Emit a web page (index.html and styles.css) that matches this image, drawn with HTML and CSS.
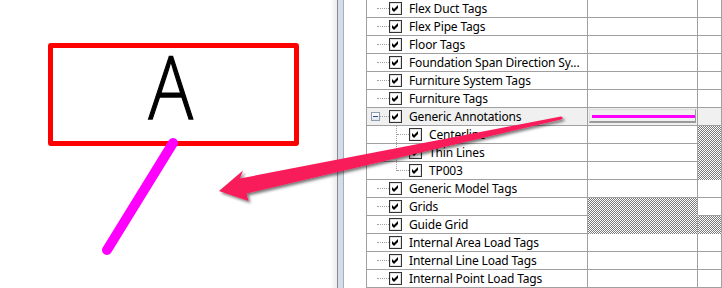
FILE: index.html
```html
<!DOCTYPE html>
<html lang="en">
<head>
    <meta charset="UTF-8">
    <title>Visibility/Graphic Overrides - Annotation Categories</title>
    <link rel="stylesheet" href="styles.css">
</head>
<body>
    <div class="screen">
        <!-- Drawing area with the sample tag -->
        <div class="canvas">
            <div class="tag-box"><span class="tag-letter">A</span></div>
            <svg class="leader" width="330" height="288" aria-hidden="true">
                <line x1="173" y1="143" x2="107" y2="250" stroke="#ff00ff" stroke-width="10" stroke-linecap="round"/>
            </svg>
        </div>

        <div class="splitter">
            <span class="splitter__shade"></span>
            <span class="splitter__edge"></span>
            <span class="splitter__bar"></span>
            <span class="splitter__edge splitter__edge--light"></span>
            <span class="splitter__gap"></span>
        </div>

        <!-- Category list -->
        <div class="categories">
            <div class="row">
                <div class="cell name"><span class="branch"></span><span class="check"></span><span class="label">Flex Duct Tags</span></div>
                <div class="cell"></div><div class="cell"></div>
            </div>
            <div class="row">
                <div class="cell name"><span class="branch"></span><span class="check"></span><span class="label">Flex Pipe Tags</span></div>
                <div class="cell"></div><div class="cell"></div>
            </div>
            <div class="row">
                <div class="cell name"><span class="branch"></span><span class="check"></span><span class="label">Floor Tags</span></div>
                <div class="cell"></div><div class="cell"></div>
            </div>
            <div class="row">
                <div class="cell name"><span class="branch"></span><span class="check"></span><span class="label">Foundation Span Direction Sy...</span></div>
                <div class="cell"></div><div class="cell"></div>
            </div>
            <div class="row">
                <div class="cell name"><span class="branch"></span><span class="check"></span><span class="label">Furniture System Tags</span></div>
                <div class="cell"></div><div class="cell"></div>
            </div>
            <div class="row">
                <div class="cell name"><span class="branch"></span><span class="check"></span><span class="label">Furniture Tags</span></div>
                <div class="cell"></div><div class="cell"></div>
            </div>
            <div class="row row--selected">
                <div class="cell name name--open"><span class="toggle"></span><span class="branch branch--short"></span><span class="check"></span><span class="label">Generic Annotations</span></div>
                <div class="cell cell--swatch"><span class="line-swatch"></span></div>
                <div class="cell"></div>
            </div>
            <div class="row">
                <div class="cell name name--child"><span class="elbow"></span><span class="check"></span><span class="label">Centerline</span></div>
                <div class="cell"></div><div class="cell cell--na"></div>
            </div>
            <div class="row">
                <div class="cell name name--child"><span class="elbow"></span><span class="check"></span><span class="label">Thin Lines</span></div>
                <div class="cell"></div><div class="cell cell--na"></div>
            </div>
            <div class="row">
                <div class="cell name name--child"><span class="elbow elbow--last"></span><span class="check"></span><span class="label">TP003</span></div>
                <div class="cell"></div><div class="cell cell--na"></div>
            </div>
            <div class="row">
                <div class="cell name"><span class="branch"></span><span class="check"></span><span class="label">Generic Model Tags</span></div>
                <div class="cell"></div><div class="cell"></div>
            </div>
            <div class="row">
                <div class="cell name"><span class="branch"></span><span class="check"></span><span class="label">Grids</span></div>
                <div class="cell cell--na"></div><div class="cell"></div>
            </div>
            <div class="row">
                <div class="cell name"><span class="branch"></span><span class="check"></span><span class="label">Guide Grid</span></div>
                <div class="cell cell--na"></div><div class="cell cell--na"></div>
            </div>
            <div class="row">
                <div class="cell name"><span class="branch"></span><span class="check"></span><span class="label">Internal Area Load Tags</span></div>
                <div class="cell"></div><div class="cell"></div>
            </div>
            <div class="row">
                <div class="cell name"><span class="branch"></span><span class="check"></span><span class="label">Internal Line Load Tags</span></div>
                <div class="cell"></div><div class="cell"></div>
            </div>
            <div class="row">
                <div class="cell name"><span class="branch"></span><span class="check"></span><span class="label">Internal Point Load Tags</span></div>
                <div class="cell"></div><div class="cell"></div>
            </div>
        </div>

        <!-- Callout arrow drawn over the screenshot -->
        <svg class="callout" width="722" height="288" aria-hidden="true">
            <defs>
                <filter id="arrowShadow" x="-10%" y="-30%" width="120%" height="160%">
                    <feDropShadow dx="2" dy="2" stdDeviation="1.6" flood-color="#000" flood-opacity="0.55"/>
                </filter>
            </defs>
            <path d="M219 191 L243 170.5 L240 178.5 L561 116.5 Q564.5 118 561 119.5 L246.5 193.5 L248.5 201 Z" fill="#f81b5a" filter="url(#arrowShadow)"/>
        </svg>
    </div>
</body>
</html>
```

FILE: styles.css
```css
:root {
    --grid-line: #a0a0a0;
    --tree-dots: #a0a0a0;
    --row-selected: #f0f0f0;
    --text: #000000;
    --font-ui: "Noto Sans", "Open Sans", sans-serif;
}

* {
    box-sizing: border-box;
}

body {
    margin: 0;
    background: #ffffff;
    font-family: var(--font-ui);
    font-size: 12px;
    color: var(--text);
}

.screen {
    position: relative;
    display: flex;
    width: 722px;
    height: 288px;
    overflow: hidden;
}

/* Drawing area */
.canvas {
    position: relative;
    flex: 0 0 330px;
    background: #ffffff;
}

.tag-box {
    position: absolute;
    left: 48px;
    top: 43px;
    width: 251px;
    height: 103px;
    border: 5px solid #ff0000;
    border-radius: 3px;
    display: flex;
    justify-content: center;
}

.tag-letter {
    display: block;
    margin: -5px 6px 0 0;
    font-family: "Open Sans", "DejaVu Sans", sans-serif;
    font-weight: 300;
    font-size: 86px;
    line-height: 1;
    -webkit-text-stroke: 1.3px #000000;
    transform: scaleX(0.86);
}

.leader {
    position: absolute;
    left: 0;
    top: 0;
}

/* Splitter between drawing and dialog */
.splitter {
    display: flex;
    flex: 0 0 36px;
}

.splitter__shade {
    width: 7px;
    background: linear-gradient(90deg, #ffffff, #ececec);
}

.splitter__edge {
    width: 1px;
    background: #8c8c8c;
}

.splitter__edge--light {
    background: #a8aeb6;
}

.splitter__bar {
    width: 5px;
    background: #d3dce8;
}

.splitter__gap {
    flex: 1;
    background: #ffffff;
}

/* Category table */
.categories {
    flex: 1;
    border-left: 1px solid var(--grid-line);
}

.row {
    display: grid;
    grid-template-columns: 221px 110px 1fr;
    height: 18px;
}

.row--selected {
    background: var(--row-selected);
}

.cell {
    border-right: 1px solid var(--grid-line);
    border-bottom: 1px solid var(--grid-line);
}

.cell--na {
    background: repeating-conic-gradient(#7a7a7a 0 25%, #ffffff 0 50%) 0 0 / 2px 2px;
    border-bottom-color: transparent;
}

.name {
    display: flex;
    align-items: center;
    padding-left: 10px;
    white-space: nowrap;
    overflow: hidden;
}

.name--open {
    padding-left: 4px;
}

.name--child {
    padding-left: 29px;
}

.branch {
    width: 12px;
    border-top: 1px dotted var(--tree-dots);
}

.branch--short {
    width: 9px;
}

.toggle {
    position: relative;
    width: 9px;
    height: 9px;
    border: 1px solid #8d9bb0;
    background: linear-gradient(180deg, #ffffff, #e2e6ec);
}

.toggle::after {
    content: "";
    position: absolute;
    left: 1px;
    top: 3px;
    width: 5px;
    height: 1px;
    background: #32508c;
}

.elbow {
    position: relative;
    align-self: stretch;
    width: 13px;
    border-left: 1px dotted var(--tree-dots);
}

.elbow::after {
    content: "";
    position: absolute;
    left: 0;
    right: 0;
    top: 8px;
    border-top: 1px dotted var(--tree-dots);
}

.elbow--last {
    align-self: flex-start;
    height: 9px;
}

.check {
    position: relative;
    flex: 0 0 13px;
    height: 13px;
    border: 1px solid #333333;
    background: #ffffff;
    box-shadow: inset 0 0 0 1px #e4e4e4;
}

.check::after {
    content: "";
    position: absolute;
    left: 0;
    top: 0;
    width: 11px;
    height: 11px;
    background: #000000;
    clip-path: polygon(2px 4px, 4px 6px, 8px 2px, 8px 5px, 4px 9px, 2px 7px);
}

.label {
    margin-left: 7px;
    line-height: 17px;
    letter-spacing: -0.15px;
}

/* Line pattern swatch on the open row */
.cell--swatch {
    display: flex;
    align-items: center;
    padding: 0 1px 0 1px;
}

.line-swatch {
    position: relative;
    width: 107px;
    height: 14px;
    margin-top: -2px;
    background: #efefef;
    border: 1px solid #dedede;
    border-right-color: #9a9a9a;
    border-bottom: 2px solid #9a9a9a;
}

.line-swatch::after {
    content: "";
    position: absolute;
    left: 2px;
    right: 0;
    top: 5px;
    height: 3px;
    background: #ff00ff;
}

/* Annotation arrow */
.callout {
    position: absolute;
    left: 0;
    top: 0;
    pointer-events: none;
}
```
